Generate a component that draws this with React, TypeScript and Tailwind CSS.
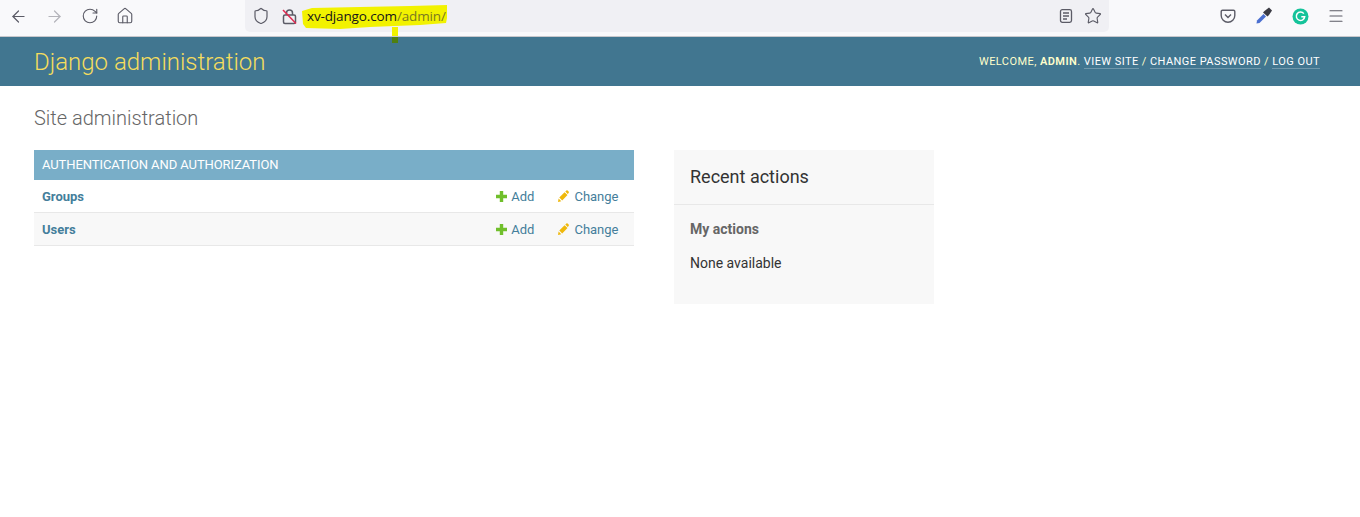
import { ArrowLeft, ArrowRight, RotateCw, House, Shield, Star, Menu } from "lucide-react";

function AdminRow({ name, striped }: { name: string; striped?: boolean }) {
    return (
        <div className={`flex h-[33px] items-center border-b border-[#e8e8e8] pl-2 pr-[15.5px] pt-[2px] text-[13px] text-[#447e9b] ${striped ? "bg-[#f8f8f8]" : "bg-white"}`}>
            <a className="font-bold">{name}</a>
            <a className="ml-auto flex items-center">
                <svg width="11" height="11" viewBox="0 0 11 11" className="mb-[2px] mr-[4.5px]">
                    <path d="M3.800 0H7.200V3.800H11V7.200H7.200V11H3.800V7.200H0V3.800H3.800Z" fill="#70bf2b" />
                </svg>
                Add
            </a>
            <a className="ml-[24px] flex items-center">
                <svg width="11" height="12" viewBox="0 0 11 12" className="mb-[2px] mr-[5px]">
                    <path d="M0 12L0.600 8.400L3.300 11.200ZM1.300 7.500L6.600 2.200L9.500 5.100L4.200 10.400ZM7.300 1.500L8.400 0.500Q9 0 9.600 0.500L10.600 1.600Q11.200 2.300 10.600 3L9.700 4Z" fill="#efb80b" />
                </svg>
                Change
            </a>
        </div>
    );
}

export default function App() {
    return (
        <div className="relative h-[517px] w-[1360px] overflow-hidden bg-white font-['Roboto',sans-serif]">

            {/* Browser toolbar */}
            <div className="flex h-[37px] items-start border-b border-[#c8c8cc] bg-[#f9f9fb] text-[#5b5b66]">
                <div className="flex h-[32px] w-[245px] items-center pl-[9px]">
                    <ArrowLeft size={19} strokeWidth={1.5} />
                    <ArrowRight size={19} strokeWidth={1.5} className="ml-[17px] text-[#b4b4ba]" />
                    <RotateCw size={18} strokeWidth={1.5} className="ml-[17px]" />
                    <House size={18} strokeWidth={1.5} className="ml-[17px]" />
                </div>

                <div className="flex h-[32px] w-[864px] items-center rounded-b-[5px] bg-[#f0f0f4] pl-[7px] pr-[7px]">
                    <Shield size={18} strokeWidth={1.6} />
                    <svg width="17" height="17" viewBox="0 0 17 17" fill="none" className="ml-[11px]">
                        <path d="M5.500 7V5a3 3 0 0 1 6 0v2" stroke="#5b5b66" strokeWidth="1.500" />
                        <rect x="2.500" y="7" width="12" height="8.500" rx="1.500" stroke="#5b5b66" strokeWidth="1.500" />
                        <path d="M2 2L15 15.500" stroke="#e22850" strokeWidth="1.500" />
                    </svg>
                    <span className="relative z-10 ml-[9px] font-['Open_Sans',sans-serif] text-[13.5px] tracking-[-0.14px] text-[#15141a]">
                        xv-django.com<span className="text-[#7b7a20]">/admin/</span>
                    </span>
                    <svg width="16" height="16" viewBox="0 0 16 16" fill="none" stroke="#5b5b66" strokeWidth="1.300" className="ml-auto">
                        <rect x="2.500" y="1.700" width="11" height="12.600" rx="1.800" />
                        <path d="M5 5H11M5 8H11M5 11H9" />
                    </svg>
                    <Star size={18} strokeWidth={1.5} className="ml-[10px]" />
                </div>

                <div className="flex h-[32px] flex-1 items-center pl-[111px]">
                    <svg width="16" height="16" viewBox="0 0 16 16" fill="none" stroke="#5b5b66" strokeWidth="1.400">
                        <path d="M2.500 2.200H13.500A1.300 1.300 0 0 1 14.800 3.500V7.500A6.800 6.800 0 0 1 1.200 7.500V3.500A1.300 1.300 0 0 1 2.500 2.200Z" />
                        <path d="M5 6.500L8 9.500L11 6.500" />
                    </svg>
                    <svg width="18" height="18" viewBox="0 0 18 18" className="ml-[19px]">
                        <path d="M1.500 16.500L2 13.500L8.500 7L11 9.500L4.500 16Z" fill="#4a6fd0" />
                        <path d="M8 5.500L9.500 4L14 0.500L17 3.500L14 8L12.500 9.500Z" fill="#3b3b44" />
                    </svg>
                    <svg width="17" height="17" viewBox="0 0 17 17" className="ml-[19px]">
                        <circle cx="8.500" cy="8.500" r="8" fill="#15c39a" />
                        <path d="M11.800 5.600A4.200 4.200 0 1 0 12.700 8.700H9.300" fill="none" stroke="white" strokeWidth="1.500" />
                    </svg>
                    <Menu size={18} strokeWidth={1.5} className="ml-[18px]" />
                </div>
            </div>

            {/* Yellow marker drawn over the address */}
            <svg width="150" height="46" viewBox="0 0 150 46" className="absolute left-[300px] top-0 z-0">
                <path d="M2 11L12 8L60 7L110 6L147 5L147 18L146 23L120 25L70 27L40 29L6 28L3 24Z" fill="#f2f200" />
                <rect x="92" y="27" width="6" height="9" fill="#f2f200" />
                <rect x="92" y="37" width="6" height="6" fill="#4f7f10" />
            </svg>

            {/* Django header */}
            <header className="flex h-[49px] items-center justify-between bg-[#417690] pl-[34px] pr-[40px]">
                <h1 className="text-[24px] font-light text-[#f5dd5d]">Django administration</h1>
                <div className="pt-[2px] text-[11px] uppercase tracking-[0.44px] text-[#ffffcc]">
                    Welcome, <strong className="font-semibold">admin</strong>.{" "}
                    <a className="border-b border-[#ffffff40] text-white">View site</a> /{" "}
                    <a className="border-b border-[#ffffff40] text-white">Change password</a> /{" "}
                    <a className="border-b border-[#ffffff40] text-white">Log out</a>
                </div>
            </header>

            {/* Content */}
            <main className="px-[34px] pt-[20px]">
                <h2 className="text-[20px] font-light leading-[24px] text-[#666]">Site administration</h2>

                <div className="mt-[20px] flex items-start gap-[40px]">
                    <section className="w-[600px]">
                        <div className="flex h-[30px] items-center bg-[#79aec8] px-2 text-[13px] uppercase tracking-[-0.09px] text-white">
                            Authentication and Authorization
                        </div>
                        <AdminRow name="Groups" />
                        <AdminRow name="Users" striped />
                    </section>

                    <aside className="h-[154px] w-[260px] bg-[#f8f8f8] text-[14px] text-[#333]">
                        <h3 className="flex h-[55px] items-center border-b border-[#e8e8e8] px-4 pb-[2px] text-[18px] font-normal">Recent actions</h3>
                        <h4 className="mt-[15px] px-4 font-bold leading-[18px] text-[#666]">My actions</h4>
                        <p className="mt-4 px-4 leading-[18px]">None available</p>
                    </aside>
                </div>
            </main>
        </div>
    );
}
